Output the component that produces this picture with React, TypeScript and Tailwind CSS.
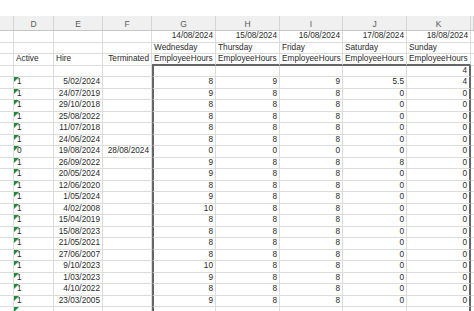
const cols = 'grid grid-cols-[14px_40px_49px_49px_64px_64px_63px_64px_64px_1fr]';
const font = { fontFamily: '"Liberation Sans", Arial, sans-serif' };

type Row = { active?: string; hire?: string; term?: string; v: (string | number)[] };

const data: Row[] = [
  { active: '1', hire: '5/02/2024', v: [8, 9, 9, 5.5, 4] },
  { active: '1', hire: '24/07/2019', v: [9, 8, 8, 0, 0] },
  { active: '1', hire: '29/10/2018', v: [8, 8, 8, 0, 0] },
  { active: '1', hire: '25/08/2022', v: [8, 8, 8, 0, 0] },
  { active: '1', hire: '11/07/2018', v: [8, 8, 8, 0, 0] },
  { active: '1', hire: '24/06/2024', v: [8, 8, 8, 0, 0] },
  { active: '0', hire: '19/08/2024', term: '28/08/2024', v: [0, 0, 0, 0, 0] },
  { active: '1', hire: '26/09/2022', v: [9, 8, 8, 8, 0] },
  { active: '1', hire: '20/05/2024', v: [9, 8, 8, 0, 0] },
  { active: '1', hire: '12/06/2020', v: [8, 8, 8, 0, 0] },
  { active: '1', hire: '1/05/2024', v: [9, 8, 8, 0, 0] },
  { active: '1', hire: '4/02/2008', v: [10, 8, 8, 0, 0] },
  { active: '1', hire: '15/04/2019', v: [8, 8, 8, 0, 0] },
  { active: '1', hire: '15/08/2023', v: [8, 8, 8, 0, 0] },
  { active: '1', hire: '21/05/2021', v: [8, 8, 8, 0, 0] },
  { active: '1', hire: '27/06/2007', v: [8, 8, 8, 0, 0] },
  { active: '1', hire: '9/10/2023', v: [10, 8, 8, 0, 0] },
  { active: '1', hire: '1/03/2023', v: [9, 8, 8, 0, 0] },
  { active: '1', hire: '4/10/2022', v: [8, 8, 8, 0, 0] },
  { active: '1', hire: '23/03/2005', v: [9, 8, 8, 0, 0] },
  // partly visible row at the bottom edge
  { active: '', hire: '', v: ['', '', '', '', ''] },
];

function Flag() {
  return (
    <svg className="absolute left-0 top-0" width="5" height="5" viewBox="0 0 5 5">
      <polygon points="0,0 5,0 0,5" fill="#1f8a3b" />
    </svg>
  );
}

// cell with gridline on right + bottom
function C({ children, right = false, cls = '' }: { children?: React.ReactNode; right?: boolean; cls?: string }) {
  return (
    <div className={`relative flex items-center whitespace-nowrap border-r border-b border-[#dcdcdc] px-[2px] ${right ? 'justify-end' : ''} ${cls}`}>
      {children}
    </div>
  );
}

export default function App() {
  const days = ['Wednesday', 'Thursday', 'Friday', 'Saturday', 'Sunday'];
  const dates = ['14/08/2024', '15/08/2024', '16/08/2024', '17/08/2024', '18/08/2024'];
  const h = (i: number) => (i % 2 === 0 ? 'h-[12px]' : 'h-[11px]');
  const box = (j: number) => (j === 0 ? 'border-l-2 border-l-[#666666]' : '') + (j === 4 ? ' border-r-2 border-r-[#666666]' : '');

  return (
    <div className="w-[474px] h-[311px] overflow-hidden bg-white text-[8.25px] leading-none text-[#2a2a2a]" style={font}>
      <div className="h-[16px] bg-white" />

      {/* column letters */}
      <div className={`${cols} h-[15px] bg-[#f0f0f0] border-b border-[#c6c6c6] text-[#5a5a5a] text-[8.5px]`}>
        {['', 'D', 'E', 'F', 'G', 'H', 'I', 'J', 'K', ''].map((l, i) => (
          <div key={i} className="flex items-end justify-center pb-[2px] border-r border-[#d4d4d4]">{l}</div>
        ))}
      </div>

      {/* dates */}
      <div className={`${cols} ${h(0)}`}>
        <C /><C /><C /><C />
        {dates.map(d => <C key={d} right>{d}</C>)}
        <C />
      </div>

      {/* weekdays */}
      <div className={`${cols} ${h(1)}`}>
        <C /><C /><C /><C />
        {days.map(d => <C key={d}>{d}</C>)}
        <C />
      </div>

      {/* field names */}
      <div className={`${cols} ${h(2)}`}>
        <C /><C>Active</C><C>Hire</C><C right>Terminated</C>
        {days.map(d => <C key={d} cls="border-b-2 border-b-[#666666]">EmployeeHours</C>)}
        <C />
      </div>

      <div className={`${cols} ${h(3)}`}>
        <C /><C /><C /><C />
        {[0, 1, 2, 3, 4].map(j => <C key={j} right cls={box(j)}>{j === 4 ? '4' : ''}</C>)}
        <C />
      </div>

      {data.map((r, i) => (
        <div key={i} className={`${cols} ${h(i + 4)}`}>
          <C />
          <C cls="pl-[3px]"><Flag />{r.active}</C>
          <C right>{r.hire}</C>
          <C right>{r.term}</C>
          {r.v.map((v, j) => <C key={j} right cls={box(j)}>{v}</C>)}
          <C />
        </div>
      ))}
    </div>
  );
}
